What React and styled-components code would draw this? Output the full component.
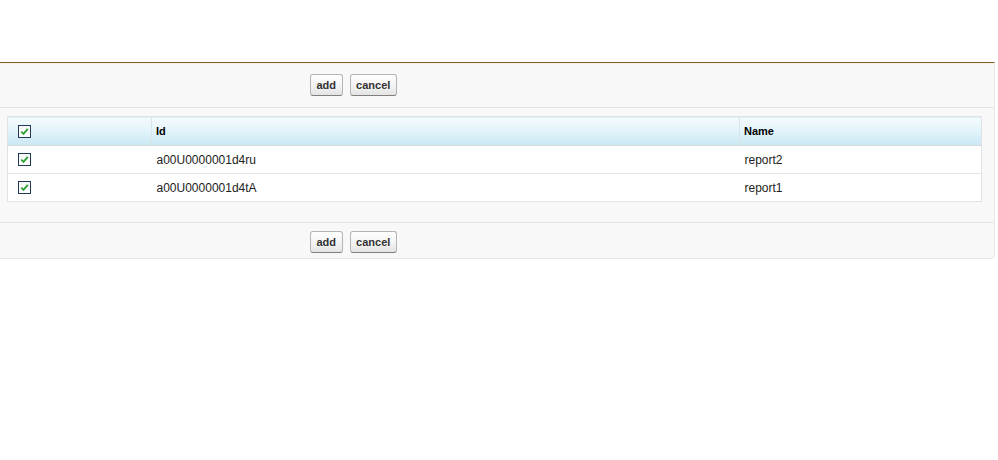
import React from "react";
import styled, { createGlobalStyle } from "styled-components";

const Global = createGlobalStyle`
  html, body { margin: 0; padding: 0; background: #fff; }
  body { font-family: "Liberation Sans", Arial, sans-serif; font-size: 12px; color: #222; }
`;

const Page = styled.div`
  width: 998px;
  height: 460px;
  padding-top: 62px;
  box-sizing: border-box;
  overflow: hidden;
`;

const Block = styled.div`
  margin-left: -6px;
  width: 1001px;
  box-sizing: border-box;
  background: #f8f8f8;
  border-top: 1px solid #80602f;
  border-right: 1px solid #e8e8e8;
  border-bottom: 1px solid #e8e8e8;
  border-bottom-right-radius: 4px;
  box-shadow: inset 0 1px 0 #fdf1de;
`;

const ButtonBar = styled.div`
  display: flex;
  gap: 7px;
  padding-left: 316px;
  height: ${(p) => p.$h}px;
  box-sizing: border-box;
  padding-top: ${(p) => p.$pt}px;
  border-bottom: ${(p) => (p.$divider ? "1px solid #e3e3e3" : "none")};
  border-top: ${(p) => (p.$top ? "1px solid #e3e3e3" : "none")};
  align-items: flex-start;
`;

const Button = styled.button`
  font-family: "Liberation Sans", Arial, sans-serif;
  font-size: 11px;
  font-weight: bold;
  color: #333;
  height: 22px;
  padding: 0 5.5px;
  border: 1px solid #b5b5b5;
  border-bottom-color: #7f7f7f;
  border-radius: 3px;
  background: linear-gradient(#ffffff, #f3f3f3 55%, #e4e4e4);
  cursor: pointer;
`;

const TableWrap = styled.div`
  padding: 8px 13px 20px 13px;
`;

const Table = styled.table`
  width: 975px;
  border-collapse: collapse;
  background: #fff;
  border: 1px solid #e0e3e5;
  table-layout: fixed;
`;

const HeadCell = styled.th`
  text-align: left;
  font-size: 11px;
  font-weight: bold;
  color: #000;
  height: 28px;
  padding: 0 0 0 ${(p) => p.$pl || 4}px;
  background: linear-gradient(#f4fbfe, #e2f3fa 50%, #c9e7f4);
  border-bottom: 1px solid #d4dadc;
  border-left: ${(p) => (p.$first ? "none" : "1px solid #dbe4e8")};
  vertical-align: middle;
`;

const Cell = styled.td`
  font-size: 12px;
  color: #222;
  height: 27px;
  padding: 0 0 0 ${(p) => p.$pl || 5}px;
  border-bottom: ${(p) => (p.$last ? "none" : "1px solid #e3e3e3")};
  vertical-align: middle;
`;

const Check = styled.span`
  display: inline-block;
  width: 11px;
  height: 11px;
  border: 1px solid #1f3a55;
  background: linear-gradient(#f6f6f6, #ffffff);
  position: relative;
  top: 1px;
  svg { display: block; }
`;

const CheckBox = () => (
  <Check>
    <svg width="11" height="11" viewBox="0 0 11 11">
      <path d="M2.3 5.6 L4.5 7.8 L8.8 2.9" fill="none" stroke="#2fa23a" strokeWidth="1.9" />
    </svg>
  </Check>
);

const rows = [
  { id: "a00U0000001d4ru", name: "report2" },
  { id: "a00U0000001d4tA", name: "report1" },
];

export default function App() {
  return (
    <Page>
      <Global />
      <Block>
        <ButtonBar $h={45} $pt={11} $divider>
          <Button>add</Button>
          <Button>cancel</Button>
        </ButtonBar>
        <TableWrap>
          <Table>
            <colgroup>
              <col style={{ width: 144 }} />
              <col style={{ width: 588 }} />
              <col />
            </colgroup>
            <thead>
              <tr>
                <HeadCell $first $pl={10}>
                  <CheckBox />
                </HeadCell>
                <HeadCell>Id</HeadCell>
                <HeadCell>Name</HeadCell>
              </tr>
            </thead>
            <tbody>
              {rows.map((r, i) => (
                <tr key={r.id}>
                  <Cell $pl={10} $last={i === rows.length - 1}>
                    <CheckBox />
                  </Cell>
                  <Cell $last={i === rows.length - 1}>{r.id}</Cell>
                  <Cell $last={i === rows.length - 1}>{r.name}</Cell>
                </tr>
              ))}
            </tbody>
          </Table>
        </TableWrap>
        <ButtonBar $h={36} $pt={8} $top>
          <Button>add</Button>
          <Button>cancel</Button>
        </ButtonBar>
      </Block>
    </Page>
  );
}
